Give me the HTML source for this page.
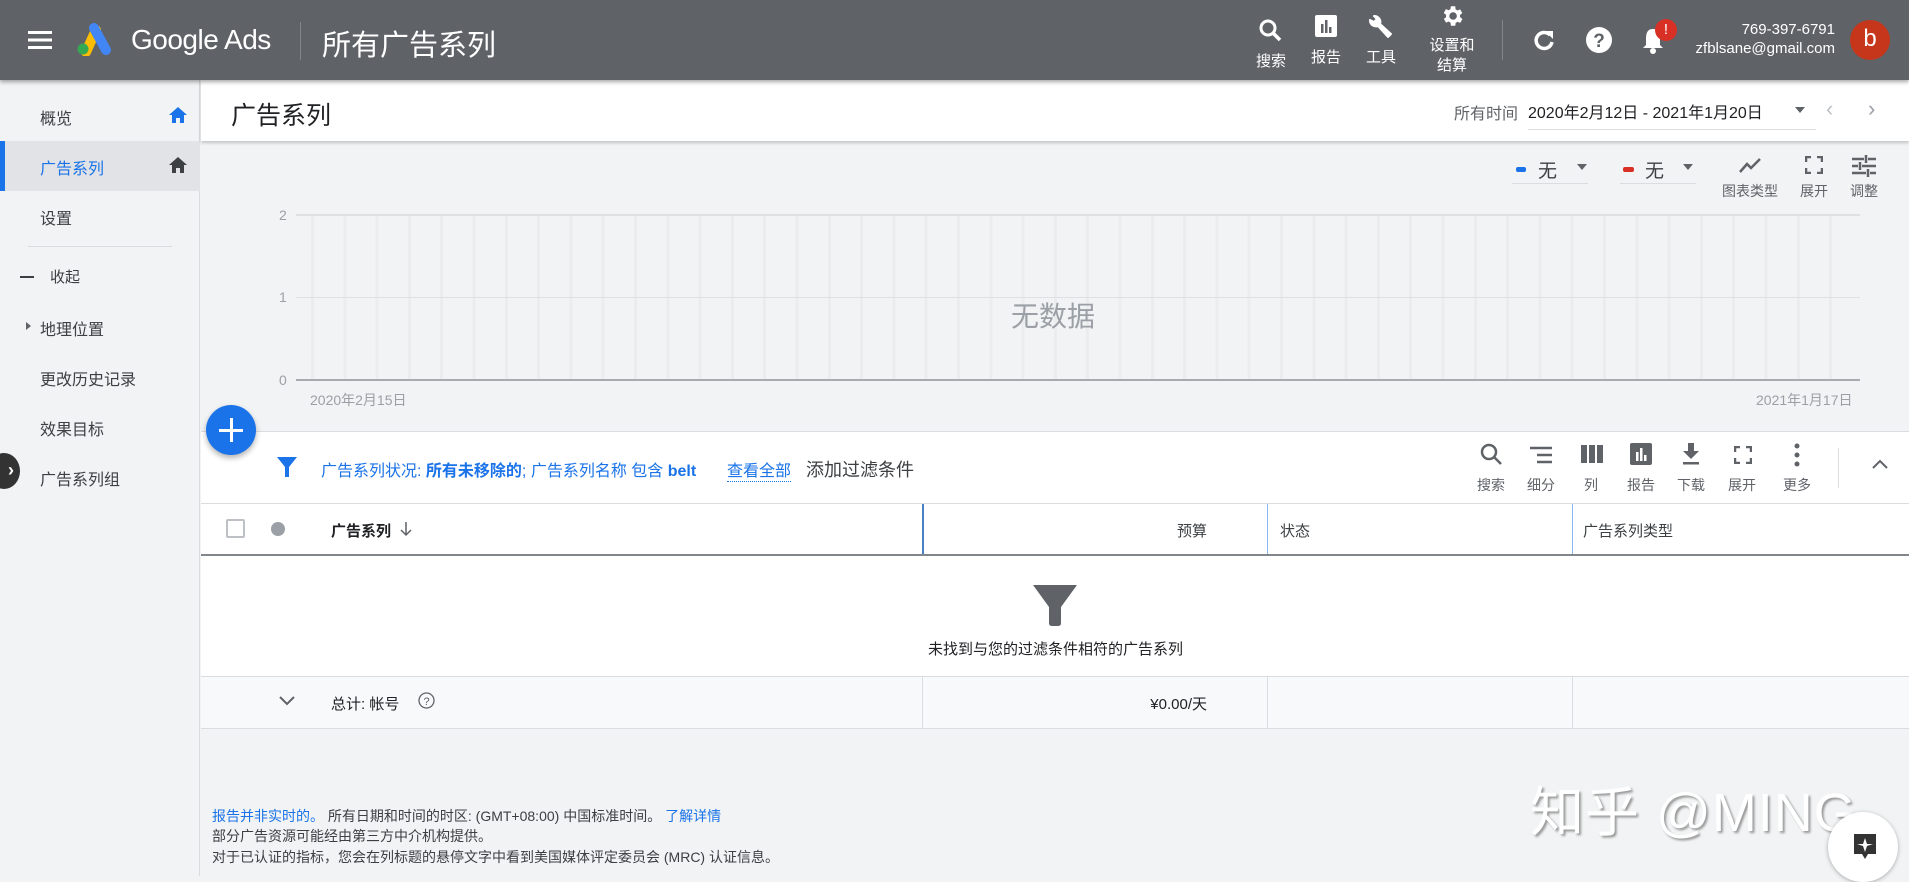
<!DOCTYPE html>
<html><head><meta charset="utf-8"><style>
*{margin:0;padding:0;box-sizing:border-box}
body{width:1909px;height:876px;overflow:hidden;background:#f1f3f4;font-family:"Liberation Sans","Noto Sans CJK SC",sans-serif;position:relative;color:#3c4043}
.a{position:absolute;white-space:nowrap}
.hdr{position:absolute;left:0;top:0;width:1909px;height:80px;background:#5f6368;box-shadow:0 2px 4px rgba(0,0,0,.35);z-index:5}
.w{color:#fff}
.sb{font-size:16px;color:#3c4043}
.lbl{font-size:14px;color:#5f6368;transform:translateX(-50%)}
.hl{font-size:15px;color:#fff;transform:translateX(-50%)}
</style></head><body>
<div class="hdr">
 <svg class="a" style="left:28px;top:30px" width="24" height="20"><rect y="1" width="24" height="3" fill="#fff"/><rect y="8.5" width="24" height="3" fill="#fff"/><rect y="16" width="24" height="3" fill="#fff"/></svg>
 <svg class="a" style="left:74px;top:20px" width="40" height="36"><path d="M12 32 L22 10" stroke="#fbbc04" stroke-width="10" stroke-linecap="round"/><path d="M20 8 L32 30" stroke="#4285f4" stroke-width="10" stroke-linecap="round"/><circle cx="9" cy="29" r="5.5" fill="#34a853"/></svg>
 <div class="a w" style="left:131px;top:24px;font-size:28px;letter-spacing:-0.5px">Google Ads</div>
 <div class="a" style="left:300px;top:22px;width:1px;height:38px;background:#80868b"></div>
 <div class="a w" style="left:322px;top:22px;font-size:29px">所有广告系列</div>
 <svg class="a" style="left:1258px;top:18px" width="24" height="24"><circle cx="10" cy="10" r="7" stroke="#fff" stroke-width="3" fill="none"/><path d="M15 15 L22 22" stroke="#fff" stroke-width="3.5"/></svg>
 <div class="a hl" style="left:1271px;top:50px">搜索</div>
 <svg class="a" style="left:1314px;top:14px" width="24" height="24"><rect x="1" y="1" width="22" height="22" rx="2" fill="#fff"/><rect x="7" y="10" width="2.5" height="9" fill="#5f6368"/><rect x="11" y="6" width="2.5" height="13" fill="#5f6368"/><rect x="15" y="13" width="2.5" height="6" fill="#5f6368"/></svg>
 <div class="a hl" style="left:1326px;top:46px">报告</div>
 <svg class="a" style="left:1366px;top:12px" width="28" height="28"><path d="M4 8 A6 6 0 0 0 12 14 L22 25 L25 22 L14 12 A6 6 0 0 0 8 4 L11 7 L8 10 Z" fill="#fff" stroke="#fff" stroke-width="2" stroke-linejoin="round"/></svg>
 <div class="a hl" style="left:1381px;top:46px">工具</div>
 <svg class="a" style="left:1439px;top:3px" width="26" height="26" viewBox="0 0 24 24"><path fill="#fff" d="M19.4 13a7.5 7.5 0 0 0 0-2l2.1-1.6-2-3.5-2.5 1a7 7 0 0 0-1.7-1L15 3h-4l-.4 2.7a7 7 0 0 0-1.7 1l-2.5-1-2 3.5L6.6 11a7.5 7.5 0 0 0 0 2l-2.1 1.6 2 3.5 2.5-1a7 7 0 0 0 1.7 1L11 21h4l.4-2.7a7 7 0 0 0 1.7-1l2.5 1 2-3.5zM13 15.5a3.5 3.5 0 1 1 0-7 3.5 3.5 0 0 1 0 7z"/></svg>
 <div class="a hl" style="left:1452px;top:36px;text-align:center;line-height:20px">设置和<br>结算</div>
 <div class="a" style="left:1502px;top:20px;width:1px;height:40px;background:#80868b"></div>
 <svg class="a" style="left:1532px;top:28px" width="24" height="24"><path d="M18 7 A8 8 0 1 0 20 14" stroke="#fff" stroke-width="3.5" fill="none"/><path d="M13 3 L21 3 L21 11 Z" fill="#fff"/></svg>
 <svg class="a" style="left:1586px;top:27px" width="26" height="26"><circle cx="13" cy="13" r="13" fill="#fff"/><text x="13" y="20" text-anchor="middle" font-size="19" font-weight="bold" fill="#5f6368" font-family="Liberation Sans">?</text></svg>
 <svg class="a" style="left:1641px;top:26px" width="24" height="28"><path d="M12 3 C6 3 5 8 5 13 L5 19 L2 22 L22 22 L19 19 L19 13 C19 8 18 3 12 3Z" fill="#fff"/><circle cx="12" cy="25" r="3" fill="#fff"/></svg>
 <div class="a" style="left:1655px;top:19px;width:22px;height:22px;border-radius:50%;background:#d93025;color:#fff;font-size:15px;text-align:center;line-height:22px">!</div>
 <div class="a w" style="right:74px;top:21px;font-size:15px">769-397-6791</div>
 <div class="a w" style="right:74px;top:40px;font-size:15px">zfblsane@gmail.com</div>
 <div class="a" style="left:1850px;top:20px;width:40px;height:40px;border-radius:50%;background:#c5361b;color:#fff;font-size:24px;text-align:center;line-height:38px">b</div>
</div>

<div class="a" style="left:0;top:80px;width:200px;height:796px;background:#f1f3f4;border-right:1px solid #dadce0"></div>
<div class="a sb" style="left:40px;top:105px">概览</div>
<svg class="a" style="left:168px;top:106px" width="20" height="18"><path d="M10 1 L19 9 L16 9 L16 17 L12 17 L12 12 L8 12 L8 17 L4 17 L4 9 L1 9Z" fill="#1a73e8"/></svg>
<div class="a" style="left:0;top:141px;width:200px;height:50px;background:#e1e3e6"></div>
<div class="a" style="left:0;top:141px;width:5px;height:50px;background:#1a73e8"></div>
<div class="a sb" style="left:40px;top:155px;color:#1a73e8">广告系列</div>
<svg class="a" style="left:168px;top:156px" width="20" height="18"><path d="M10 1 L19 9 L16 9 L16 17 L12 17 L12 12 L8 12 L8 17 L4 17 L4 9 L1 9Z" fill="#3c4043"/></svg>
<div class="a sb" style="left:40px;top:205px">设置</div>
<div class="a" style="left:28px;top:246px;width:144px;height:1px;background:#dadce0"></div>
<div class="a" style="left:20px;top:276px;width:14px;height:2px;background:#3c4043"></div>
<div class="a sb" style="left:50px;top:266px;font-size:15px">收起</div>
<div class="a" style="left:26px;top:322px;border-left:5px solid #5f6368;border-top:4px solid transparent;border-bottom:4px solid transparent"></div>
<div class="a sb" style="left:40px;top:316px">地理位置</div>
<div class="a sb" style="left:40px;top:366px">更改历史记录</div>
<div class="a sb" style="left:40px;top:416px">效果目标</div>
<div class="a sb" style="left:40px;top:466px">广告系列组</div>
<div class="a" style="left:-12px;top:453px;width:32px;height:36px;border-radius:50%;background:#333;color:#fff;font-size:18px;font-weight:bold;line-height:34px;text-align:right;padding-right:6px">›</div>

<div class="a" style="left:201px;top:80px;width:1708px;height:61px;background:#fff;box-shadow:0 2px 3px rgba(0,0,0,.2)"></div>
<div class="a" style="left:231px;top:96px;font-size:25px;color:#202124">广告系列</div>
<div class="a" style="left:1454px;top:100px;font-size:16px;color:#5f6368">所有时间</div>
<div class="a" style="left:1528px;top:99px;font-size:16px;color:#202124">2020年2月12日 - 2021年1月20日</div>
<div class="a" style="left:1528px;top:129px;width:288px;height:1px;background:#dadce0"></div>
<div class="a" style="left:1795px;top:107px;border-top:6px solid #5f6368;border-left:5px solid transparent;border-right:5px solid transparent"></div>
<div class="a" style="left:1826px;top:96px;font-size:22px;color:#bdc1c6">‹</div>
<div class="a" style="left:1868px;top:96px;font-size:22px;color:#9aa0a6">›</div>

<div class="a" style="left:1516px;top:167px;width:10px;height:5px;border-radius:2px;background:#1a73e8"></div>
<div class="a" style="left:1538px;top:156px;font-size:19px;color:#3c4043">无</div>
<div class="a" style="left:1577px;top:164px;border-top:6px solid #5f6368;border-left:5px solid transparent;border-right:5px solid transparent"></div>
<div class="a" style="left:1512px;top:183px;width:76px;height:1px;background:#dadce0"></div>
<div class="a" style="left:1623px;top:167px;width:11px;height:5px;border-radius:2px;background:#d93025"></div>
<div class="a" style="left:1645px;top:156px;font-size:19px;color:#3c4043">无</div>
<div class="a" style="left:1683px;top:164px;border-top:6px solid #5f6368;border-left:5px solid transparent;border-right:5px solid transparent"></div>
<div class="a" style="left:1620px;top:183px;width:76px;height:1px;background:#dadce0"></div>
<svg class="a" style="left:1738px;top:156px" width="24" height="18"><path d="M2 16 L9 8 L13 12 L22 3" stroke="#5f6368" stroke-width="2.5" fill="none"/></svg>
<div class="a lbl" style="left:1750px;top:181px">图表类型</div>
<svg class="a" style="left:1805px;top:156px" width="18" height="18"><path d="M1 6V1H6M12 1H17V6M17 12V17H12M6 17H1V12" stroke="#5f6368" stroke-width="2.5" fill="none"/></svg>
<div class="a lbl" style="left:1814px;top:181px">展开</div>
<svg class="a" style="left:1852px;top:155px" width="24" height="22"><path d="M0 4H12M16 4H24M0 11H6M10 11H24M0 18H14M18 18H24" stroke="#5f6368" stroke-width="2.5"/><path d="M14 0V8M8 7V15M16 14V22" stroke="#5f6368" stroke-width="2.5"/></svg>
<div class="a lbl" style="left:1864px;top:181px">调整</div>

<div class="a" style="left:296px;top:215px;width:1564px;height:165px;background:repeating-linear-gradient(90deg,transparent 0,transparent 15px,#ebecee 15px,#ebecee 18px,transparent 18px,transparent 32.3px)"></div>
<div class="a" style="left:296px;top:214px;width:1564px;height:2px;background:#dfe0e2"></div>
<div class="a" style="left:296px;top:297px;width:1564px;height:1px;background:#dfe0e2"></div>
<div class="a" style="left:296px;top:379px;width:1564px;height:2px;background:#a8aaad"></div>
<div class="a" style="left:279px;top:207px;font-size:14px;color:#9aa0a6">2</div>
<div class="a" style="left:279px;top:289px;font-size:14px;color:#9aa0a6">1</div>
<div class="a" style="left:279px;top:372px;font-size:14px;color:#9aa0a6">0</div>
<div class="a" style="left:310px;top:390px;font-size:14px;color:#9aa0a6">2020年2月15日</div>
<div class="a" style="left:1756px;top:390px;font-size:14px;color:#9aa0a6">2021年1月17日</div>
<div class="a" style="left:1011px;top:295px;font-size:28px;color:#9aa0a6">无数据</div>

<div class="a" style="left:201px;top:431px;width:1708px;height:298px;background:#fff;border-top:1px solid #dadce0"></div>
<div class="a" style="left:206px;top:405px;width:50px;height:50px;border-radius:50%;background:#1a73e8;box-shadow:0 3px 6px rgba(0,0,0,.3);z-index:3"></div>
<div class="a" style="left:219px;top:429px;width:24px;height:3px;background:#fff;z-index:4"></div>
<div class="a" style="left:229.5px;top:418px;width:3px;height:24px;background:#fff;z-index:4"></div>
<svg class="a" style="left:276px;top:456px" width="22" height="22"><path d="M1 1H21L13 11V21H9V11Z" fill="#1a73e8"/></svg>
<div class="a" style="left:321px;top:457px;font-size:16px;color:#1a73e8">广告系列状况: <b>所有未移除的</b>; 广告系列名称 包含 <b>belt</b></div>
<div class="a" style="left:727px;top:457px;font-size:16px;color:#1a73e8;border-bottom:1px dotted #1a73e8">查看全部</div>
<div class="a" style="left:806px;top:456px;font-size:18px;color:#3c4043">添加过滤条件</div>
<svg class="a" style="left:1479px;top:442px" width="24" height="24"><circle cx="10" cy="10" r="7" stroke="#5f6368" stroke-width="2.5" fill="none"/><path d="M15 15 L22 22" stroke="#5f6368" stroke-width="2.5"/></svg>
<div class="a lbl" style="left:1491px;top:475px">搜索</div>
<svg class="a" style="left:1530px;top:446px" width="22" height="18"><path d="M0 2H22M7 9H22M7 16H22" stroke="#5f6368" stroke-width="2.5"/></svg>
<div class="a lbl" style="left:1541px;top:475px">细分</div>
<svg class="a" style="left:1581px;top:445px" width="22" height="18"><rect x="0" y="0" width="6" height="18" fill="#5f6368"/><rect x="8" y="0" width="6" height="18" fill="#5f6368"/><rect x="16" y="0" width="6" height="18" fill="#5f6368"/></svg>
<div class="a lbl" style="left:1591px;top:475px">列</div>
<svg class="a" style="left:1630px;top:443px" width="22" height="22"><rect width="22" height="22" rx="2" fill="#5f6368"/><rect x="6" y="9" width="2.5" height="9" fill="#fff"/><rect x="10" y="5" width="2.5" height="13" fill="#fff"/><rect x="14" y="12" width="2.5" height="6" fill="#fff"/></svg>
<div class="a lbl" style="left:1641px;top:475px">报告</div>
<svg class="a" style="left:1681px;top:443px" width="20" height="22"><path d="M7 0H13V8H18L10 16L2 8H7Z" fill="#5f6368"/><rect x="2" y="19" width="16" height="2.5" fill="#5f6368"/></svg>
<div class="a lbl" style="left:1691px;top:475px">下载</div>
<svg class="a" style="left:1734px;top:446px" width="18" height="18"><path d="M1 6V1H6M12 1H17V6M17 12V17H12M6 17H1V12" stroke="#5f6368" stroke-width="2.5" fill="none"/></svg>
<div class="a lbl" style="left:1742px;top:475px">展开</div>
<svg class="a" style="left:1793px;top:443px" width="8" height="24"><circle cx="4" cy="3" r="2.5" fill="#5f6368"/><circle cx="4" cy="12" r="2.5" fill="#5f6368"/><circle cx="4" cy="21" r="2.5" fill="#5f6368"/></svg>
<div class="a lbl" style="left:1797px;top:475px">更多</div>
<div class="a" style="left:1838px;top:448px;width:1px;height:40px;background:#dadce0"></div>
<svg class="a" style="left:1872px;top:459px" width="16" height="10"><path d="M1 9L8 2L15 9" stroke="#5f6368" stroke-width="2" fill="none"/></svg>

<div class="a" style="left:201px;top:503px;width:1708px;height:1px;background:#dadce0"></div>
<div class="a" style="left:201px;top:554px;width:1708px;height:2px;background:#80868b"></div>
<div class="a" style="left:226px;top:519px;width:19px;height:19px;border:2px solid #bdc1c6;border-radius:2px"></div>
<div class="a" style="left:271px;top:522px;width:14px;height:14px;border-radius:50%;background:#9aa0a6"></div>
<div class="a" style="left:331px;top:520px;font-size:15px;font-weight:bold;color:#202124">广告系列</div>
<svg class="a" style="left:400px;top:521px" width="12" height="16"><path d="M6 1V14M1 9L6 14L11 9" stroke="#5f6368" stroke-width="1.5" fill="none"/></svg>
<div class="a" style="left:922px;top:504px;width:2px;height:50px;background:#4a7fc1"></div>
<div class="a" style="left:1267px;top:504px;width:1px;height:50px;background:#8ab4f8"></div>
<div class="a" style="left:1572px;top:504px;width:1px;height:50px;background:#8ab4f8"></div>
<div class="a" style="right:702px;top:520px;font-size:15px;color:#3c4043">预算</div>
<div class="a" style="left:1280px;top:520px;font-size:15px;color:#3c4043">状态</div>
<div class="a" style="left:1583px;top:520px;font-size:15px;color:#3c4043">广告系列类型</div>

<svg class="a" style="left:1033px;top:585px" width="44" height="42"><path d="M0 0H44L28 22V38Q28 41 25 41H19Q16 41 16 38V22Z" fill="#5f6368"/></svg>
<div class="a" style="left:928px;top:638px;font-size:15px;color:#202124">未找到与您的过滤条件相符的广告系列</div>

<div class="a" style="left:201px;top:676px;width:1708px;height:53px;background:#f8f9fa;border-top:1px solid #dadce0;border-bottom:1px solid #dadce0"></div>
<div class="a" style="left:922px;top:677px;width:1px;height:51px;background:#dadce0"></div>
<div class="a" style="left:1267px;top:677px;width:1px;height:51px;background:#dadce0"></div>
<div class="a" style="left:1572px;top:677px;width:1px;height:51px;background:#dadce0"></div>
<svg class="a" style="left:279px;top:696px" width="16" height="10"><path d="M1 1L8 8L15 1" stroke="#5f6368" stroke-width="2" fill="none"/></svg>
<div class="a" style="left:331px;top:693px;font-size:15px;color:#202124">总计: 帐号</div>
<svg class="a" style="left:418px;top:692px" width="17" height="17"><circle cx="8.5" cy="8.5" r="7.5" stroke="#5f6368" stroke-width="1.3" fill="none"/><text x="8.5" y="13" text-anchor="middle" font-size="11" fill="#5f6368" font-family="Liberation Sans">?</text></svg>
<div class="a" style="right:702px;top:693px;font-size:15px;color:#202124">¥0.00/天</div>

<div class="a" style="left:212px;top:806px;font-size:14px;color:#3c4043"><span style="color:#1a73e8">报告并非实时的。</span> 所有日期和时间的时区: (GMT+08:00) 中国标准时间。 <span style="color:#1a73e8">了解详情</span></div>
<div class="a" style="left:212px;top:826px;font-size:14px;color:#3c4043">部分广告资源可能经由第三方中介机构提供。</div>
<div class="a" style="left:212px;top:847px;font-size:14px;color:#3c4043">对于已认证的指标，您会在列标题的悬停文字中看到美国媒体评定委员会 (MRC) 认证信息。</div>

<div class="a" style="left:1530px;top:768px;font-size:54px;color:#fff;text-shadow:2px 2px 2px #999;letter-spacing:1px">知乎 @MING</div>
<div class="a" style="left:1828px;top:812px;width:70px;height:70px;border-radius:50%;background:#fff;box-shadow:0 1px 4px rgba(0,0,0,.3)"></div>
<svg class="a" style="left:1852px;top:832px" width="26" height="30"><path d="M2 2H24V22H16L13 27L10 22H2Z" fill="#333"/><path d="M13 6L15 12L21 12L15 14L13 20L11 14L5 12L11 12Z" fill="#fff"/></svg>
</body></html>
